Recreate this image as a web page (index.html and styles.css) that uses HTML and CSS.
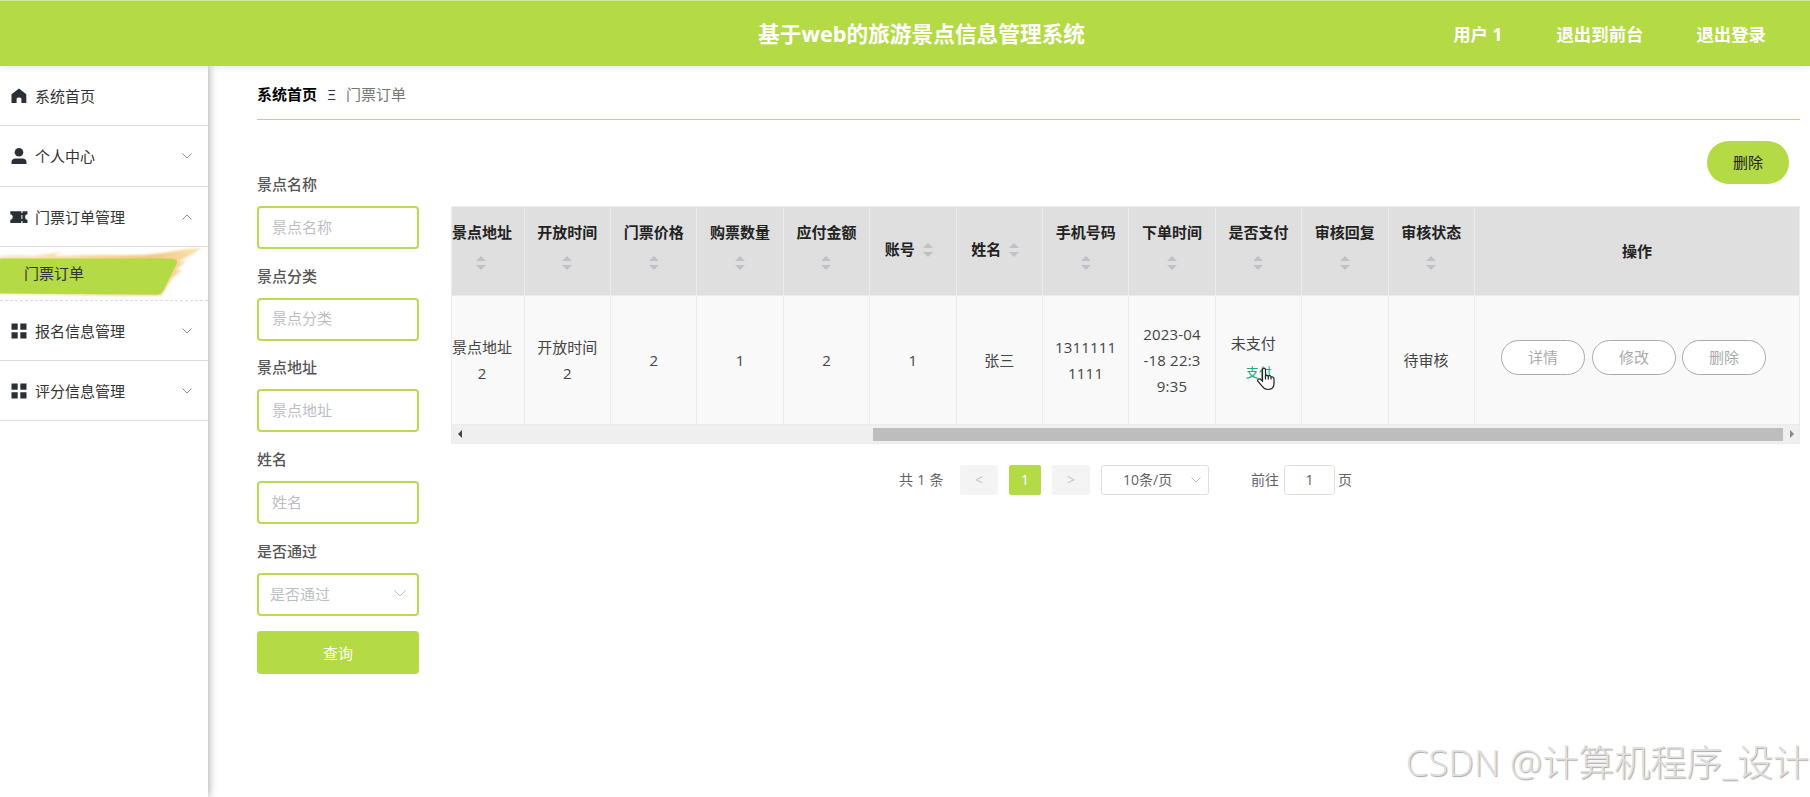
FILE: index.html
```html
<!DOCTYPE html>
<html lang="zh-CN">
<head>
<meta charset="utf-8">
<title>基于web的旅游景点信息管理系统</title>
<link rel="stylesheet" href="styles.css">
</head>
<body>
<header class="header">
  <h1 class="header-title">基于web的旅游景点信息管理系统</h1>
  <nav class="header-nav"><span class="nav-user">用户 1</span><span class="nav-front">退出到前台</span><span>退出登录</span></nav>
</header>
<div class="body">
  <aside class="sidebar">
    <div class="menu-item">
      <svg class="icon" viewBox="0 0 18 18"><path d="M9 1.6 16.3 7.2V16H11.4V11.7Q11.4 10.4 9 10.4T6.6 11.7V16H1.5V7.2Z"/></svg>
      <span>系统首页</span>
    </div>
    <div class="menu-item">
      <svg class="icon" viewBox="0 0 18 18"><circle cx="9" cy="5.3" r="4.3"/><path d="M1.5 17V15Q1.7 11.5 5.5 11.5H12.5Q16.3 11.5 16.5 15V17Z"/></svg>
      <span>个人中心</span>
      <svg class="arrow" viewBox="0 0 10 6"><path d="M.5.5 5 5 9.500.5"/></svg>
    </div>
    <div class="menu-item">
      <svg class="icon" viewBox="0 0 18 18"><path d="M.3 3.200H11.300V5H12.500V3.200H17.500V6.200Q15 6.500 15 9T17.500 12V15H12.500V13H11.300V15H.3V12Q2.800 11.500 2.800 9T.3 6.200Z"/><path class="notch" d="M11.900 7V11"/></svg>
      <span>门票订单管理</span>
      <svg class="arrow" viewBox="0 0 10 6"><path d="M.5 5.500 5 1 9.500 5.500"/></svg>
    </div>
    <div class="submenu-item">
      <svg class="brush" viewBox="0 0 208 53">
        <defs>
          <filter id="soft" x="-5%" y="-10%" width="110%" height="120%"><feGaussianBlur stdDeviation=".9"/></filter>
          <linearGradient id="paint" x1="0" x2="1"><stop offset="0" stop-color="#f6e9c0"/><stop offset=".3" stop-color="#f9dfa8"/><stop offset=".75" stop-color="#f3c884"/><stop offset="1" stop-color="#fae3ad"/></linearGradient>
        </defs>
        <path filter="url(#soft)" fill="url(#paint)" d="M0 9 17 8 32 9 62 5 54 9 85 8 114 8 143 8 163 6 180 3 202 1 192 7 178 15 186 14 176 23 182 23 172 31 165 43 161 48.500 104 48.500 0 47Z"/>
        <path fill="#b4da46" d="M0 11.500H169Q180 11.500 176 18L164 42Q162 48 155 47.500L0 46.500Z"/>
      </svg>
      <span class="submenu-label">门票订单</span>
    </div>
    <div class="menu-item">
      <svg class="icon" viewBox="0 0 18 18"><path d="M1.500 1.500H7.700V7.700H1.500ZM10.300 1.500H16.500V7.700H10.300ZM1.500 10.300H7.700V16.500H1.500ZM10.300 10.300H16.500V16.500H10.300Z"/></svg>
      <span>报名信息管理</span>
      <svg class="arrow" viewBox="0 0 10 6"><path d="M.5.5 5 5 9.500.5"/></svg>
    </div>
    <div class="menu-item">
      <svg class="icon" viewBox="0 0 18 18"><path d="M1.500 1.500H7.700V7.700H1.500ZM10.300 1.500H16.500V7.700H10.300ZM1.500 10.300H7.700V16.500H1.500ZM10.300 10.300H16.500V16.500H10.300Z"/></svg>
      <span>评分信息管理</span>
      <svg class="arrow" viewBox="0 0 10 6"><path d="M.5.5 5 5 9.500.5"/></svg>
    </div>
  </aside>
  <main class="main">
    <div class="breadcrumb"><b>系统首页</b><span class="crumb-sep">Ξ</span><span>门票订单</span></div>
    <div class="content">
      <form class="search">
        <label class="field"><span class="field-label">景点名称</span><span class="input">景点名称</span></label>
        <label class="field"><span class="field-label">景点分类</span><span class="input">景点分类</span></label>
        <label class="field"><span class="field-label">景点地址</span><span class="input">景点地址</span></label>
        <label class="field"><span class="field-label">姓名</span><span class="input">姓名</span></label>
        <label class="field"><span class="field-label">是否通过</span><span class="input select">是否通过<svg class="select-arrow" viewBox="0 0 12 7"><path d="M.5.5 6 6 11.500.5"/></svg></span></label>
        <button class="search-btn" type="button">查询</button>
      </form>
      <section class="list">
        <div class="toolbar"><button class="delete-btn" type="button">删除</button></div>
        <div class="table">
          <div class="row head">
            <div class="cell first"><span>景点地址</span><i class="sort"></i></div>
            <div class="cell"><span>开放时间</span><i class="sort"></i></div>
            <div class="cell"><span>门票价格</span><i class="sort"></i></div>
            <div class="cell"><span>购票数量</span><i class="sort"></i></div>
            <div class="cell"><span>应付金额</span><i class="sort"></i></div>
            <div class="cell inline"><span>账号</span><i class="sort"></i></div>
            <div class="cell inline"><span>姓名</span><i class="sort"></i></div>
            <div class="cell"><span>手机号码</span><i class="sort"></i></div>
            <div class="cell"><span>下单时间</span><i class="sort"></i></div>
            <div class="cell"><span>是否支付</span><i class="sort"></i></div>
            <div class="cell"><span>审核回复</span><i class="sort"></i></div>
            <div class="cell"><span>审核状态</span><i class="sort"></i></div>
            <div class="cell ops-head"><span>操作</span></div>
          </div>
          <div class="row data">
            <div class="cell first">景点地址<br>2</div>
            <div class="cell">开放时间<br>2</div>
            <div class="cell">2</div>
            <div class="cell">1</div>
            <div class="cell">2</div>
            <div class="cell">1</div>
            <div class="cell">张三</div>
            <div class="cell digits">1311111<br>1111</div>
            <div class="cell digits">2023-04<br>-18 22:3<br>9:35</div>
            <div class="cell pay"><span>未支付</span><span class="pay-link">支付
              <svg class="cursor" viewBox="0 0 20 24"><path d="M6.500 14V3Q6.500 1.200 8 1.200T9.500 3V9Q10.500 7.600 12.300 9Q14 8 15 9.800Q18 9.500 18 12V16Q18 22.500 12 22.500Q8.500 22.500 6.500 19.500L2 14.500Q1 12.800 2.500 12T6.500 14Z"/><path d="M9.500 9V12.500M12.300 9V12.500M15 10V12.500"/></svg></span></div>
            <div class="cell"></div>
            <div class="cell status">待审核</div>
            <div class="cell ops"><button type="button">详情</button><button type="button">修改</button><button type="button">删除</button></div>
          </div>
          <div class="scrollbar"><i class="scroll-left"></i><span class="thumb"></span><i class="scroll-right"></i></div>
        </div>
        <div class="pagination">
          <span class="total">共 1 条</span>
          <span class="page-btn">&lt;</span>
          <span class="page-btn current">1</span>
          <span class="page-btn">&gt;</span>
          <span class="page-size">10条/页<svg class="size-arrow" viewBox="0 0 10 6"><path d="M.5.5 5 5 9.500.5"/></svg></span>
          <span class="jump-label">前往</span><span class="jump">1</span><span>页</span>
        </div>
      </section>
    </div>
  </main>
</div>
<div class="watermark"><span class="watermark-site">CSDN @</span>计算机程序_设计</div>
</body>
</html>
```
FILE: styles.css
```css
* { box-sizing: border-box; }
body { margin: 0; height: 797px; overflow: hidden; background: #fff; color: #333; font: 15px/26px "Open Sans", "Noto Sans CJK SC", sans-serif; position: relative; }
button { font: inherit; border: 0; padding: 0; }
svg { display: block; }

.header { display: grid; grid-template-columns: 758px 1fr auto; align-items: center; height: 66px; padding-right: 44px; background: #b4da46; border-top: 1px solid #d3e99a; color: #fff; box-shadow: 0 1px 7px rgba(150, 200, 190, .3); }
.header-title { grid-column: 2; margin: 0; font-size: 21.7px; line-height: 64px; font-weight: 700; white-space: nowrap; }
.header-nav { display: flex; font-size: 17.4px; font-weight: 700; }
.nav-user { margin-right: 54px; }
.nav-front { margin-right: 53px; }

.body { display: flex; height: 731px; }
.sidebar { width: 208px; flex: none; box-shadow: 1px 0 8px rgba(0, 0, 0, .34); clip-path: inset(0 -14px 0 0); }
.menu-item { display: flex; align-items: center; height: 60.300px; padding: 1px 16px 0 10px; border-bottom: 1px solid #dcdcdc; }
.icon { width: 18px; height: 18px; margin-right: 7px; fill: #2b2f36; }
.notch { stroke: #fff; stroke-width: 1; }
.arrow { width: 10px; height: 6px; margin-left: auto; fill: none; stroke: #8d8d8d; stroke-width: 1; overflow: visible; }
.submenu-item { position: relative; height: 54px; border-bottom: 1px dashed #ddd; }
.brush { position: absolute; left: 0; top: 0; width: 208px; height: 53px; }
.submenu-label { position: relative; display: block; padding: 13px 0 0 24px; }

.main { flex: 1; min-width: 0; padding: 0 10px 0 49px; }
.breadcrumb { display: flex; height: 54px; padding-top: 15px; border-bottom: 1px solid #bfd865; color: #777; }
.breadcrumb b { color: #000; }
.crumb-sep { width: 29px; text-align: center; color: #333; }
.content { display: flex; }
.search { width: 162px; margin-right: 32px; padding-top: 51px; }
.field { display: block; height: 91.700px; }
.field-label { display: block; height: 35px; font-weight: 500; color: #555; }
.input { display: flex; align-items: center; height: 43px; padding: 0 13px 2px; border: 2px solid #b9d957; border-radius: 4px; color: #bcbec4; }
.select { padding: 0 11px 1px; }
.select-arrow { width: 12px; height: 7px; margin-left: auto; fill: none; stroke: #bcbec4; }
.search-btn { display: block; width: 162px; height: 43px; margin-top: 2px; border-radius: 4px; background: #b4da46; color: #fff; }

.list { flex: 1; min-width: 0; }
.toolbar { display: flex; justify-content: flex-end; height: 86px; padding: 21px 11px 0 0; }
.delete-btn { width: 82px; height: 43px; padding-bottom: 2px; border-radius: 22px; background: #b4da46; color: #222; }
.table { border: 1px solid #ebebeb; }
.row { display: grid; grid-template-columns: 72.600px repeat(11, 86.400px) 1fr; }
.cell { display: flex; flex-direction: column; align-items: center; justify-content: center; border-right: 1px solid #ebebeb; text-align: center; white-space: nowrap; }
.cell:last-child { border-right: 0; }
.first { align-items: flex-start; text-align: center; }
.head { height: 89px; background: #dfdfdf; color: #222; font-weight: 700; border-bottom: 1px solid #ebebeb; }
.head .cell { justify-content: flex-start; padding-top: 12px; }
.head .first .sort { margin-left: 24px; }
.sort { display: flex; flex-direction: column; gap: 4px; margin-top: 11px; }
.sort::before, .sort::after { content: ""; border: 5px solid transparent; }
.sort::before { border-top: 0; border-bottom-color: #bfc1c7; }
.sort::after { border-bottom: 0; border-top-color: #bfc1c7; }
.head .inline { flex-direction: row; align-items: flex-start; justify-content: center; padding: 29px 8px 0 0; gap: 8px; }
.inline .sort { margin-top: 7px; }
.head .ops-head { padding-top: 31px; }
.data { height: 129px; background: #f9f9f9; color: #444; border-bottom: 1px solid #ebebeb; }
.digits { letter-spacing: .2px; }
.data .pay { align-items: flex-start; padding: 0 0 5px 15px; gap: 3px; }
.pay-link { position: relative; margin-left: 15px; color: #24a982; font-size: 13px; }
.cursor { position: absolute; left: 10px; top: 8px; width: 20px; height: 24px; fill: #fff; stroke: #222; stroke-width: 1.200; }
.data .status { align-items: flex-start; padding-left: 15px; }
.data .ops { flex-direction: row; justify-content: flex-start; padding: 0 0 6px 26px; gap: 7px; }
.ops button { width: 84px; height: 35px; border: 1px solid #aaa; border-radius: 18px; background: #fff; color: #aaa; }
.ops button:last-child { margin-left: -1px; }
.scrollbar { display: flex; align-items: center; height: 18px; padding: 0 5px 0 6px; background: #efefef; }
.scroll-left { border: 4px solid transparent; border-left: 0; border-right-color: #444; }
.thumb { flex: 1; height: 13px; margin: 0 7px 0 411px; background: #bdbdbd; }
.scroll-right { border: 4px solid transparent; border-right: 0; border-left-color: #888; }

.pagination { display: flex; align-items: center; height: 30px; margin: 21px 0 0 448px; font-size: 14px; color: #606266; }
.total { width: 61px; letter-spacing: .3px; white-space: nowrap; }
.page-btn { width: 38px; height: 30px; margin-right: 11px; border-radius: 2px; background: #f4f4f5; color: #c0c4cc; text-align: center; line-height: 30px; }
.current { width: 32px; background: #b4da46; color: #fff; }
.page-size { display: flex; align-items: center; width: 108px; height: 30px; padding: 0 7px 0 21px; border: 1px solid #dcdfe6; border-radius: 3px; }
.size-arrow { width: 10px; height: 6px; margin-left: auto; fill: none; stroke: #c0c4cc; }
.jump-label { margin: 0 5px 0 42px; }
.jump { width: 51px; height: 30px; margin-right: 3px; border: 1px solid #dcdfe6; border-radius: 3px; text-align: center; line-height: 28px; }

.watermark { position: absolute; right: 1px; bottom: 10px; font: 300 36px/48px "Open Sans", "Noto Sans CJK SC", sans-serif; color: #e0e0e0; text-shadow: 1px 1px 1px #a8a8a8; white-space: nowrap; }
.watermark-site { letter-spacing: .3px; }
```
